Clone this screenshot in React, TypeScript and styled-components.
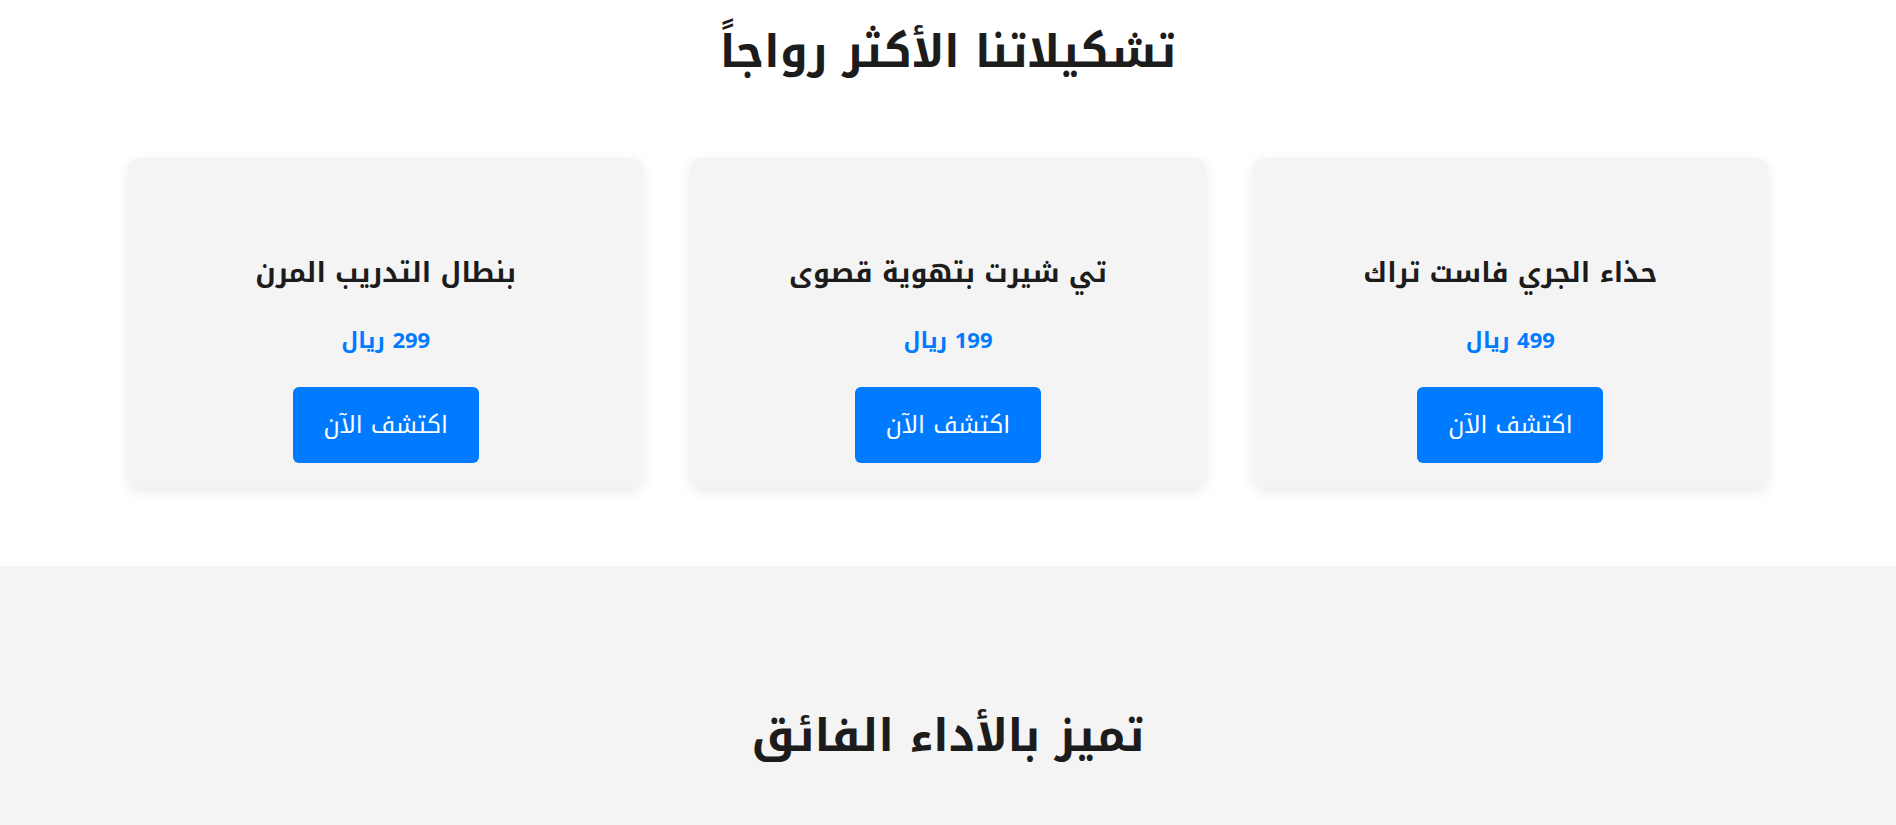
import React from 'react';
import styled, { createGlobalStyle } from 'styled-components';

const arabic = `"Noto Kufi Arabic", "Noto Sans Arabic", "DejaVu Sans", sans-serif`;

const GlobalStyle = createGlobalStyle`
  html, body {
    margin: 0;
    padding: 0;
    background: #fff;
  }
  body {
    direction: rtl;
    font-family: ${arabic};
    color: #1c1c1c;
  }
  * {
    box-sizing: border-box;
  }
`;

const Section = styled.section<{ $tone?: 'plain' | 'muted' }>`
  background: ${p => (p.$tone === 'muted' ? '#f4f4f4' : '#fff')};
  padding: ${p => (p.$tone === 'muted' ? '136px 0 80px' : '18px 0 79px')};
`;

const SectionTitle = styled.h2<{ $gap?: number }>`
  margin: 0 0 ${p => p.$gap ?? 0}px;
  text-align: center;
  font-family: ${arabic};
  font-size: 45px;
  font-weight: 700;
  line-height: 68px;
  color: #1c1c1c;
`;

const Grid = styled.div`
  display: grid;
  grid-template-columns: repeat(3, 1fr);
  gap: 47px;
  padding: 0 128px;
`;

const Card = styled.article`
  background: #f4f4f4;
  border-radius: 12px;
  box-shadow: 0 4px 14px rgba(0, 0, 0, 0.09);
  height: 329px;
  padding: 95px 24px 24px;
  display: flex;
  flex-direction: column;
  align-items: center;
  text-align: center;
`;

const ProductName = styled.h3`
  margin: 0;
  font-family: ${arabic};
  font-size: 27px;
  font-weight: 700;
  line-height: 40px;
  color: #1c1c1c;
`;

const Price = styled.p`
  margin: 31px 0 0;
  font-family: ${arabic};
  font-size: 22px;
  font-weight: 700;
  line-height: 34px;
  color: #007bff;
`;

const ShopButton = styled.a`
  margin-top: 29px;
  display: inline-flex;
  align-items: center;
  justify-content: center;
  width: 186px;
  height: 77px;
  border-radius: 6px;
  background: #007bff;
  color: #fff;
  font-family: ${arabic};
  font-size: 24px;
  font-weight: 400;
  text-decoration: none;
  cursor: pointer;
`;

type Product = { id: number; name: string; price: number };

const products: Product[] = [
  { id: 1, name: 'حذاء الجري فاست تراك', price: 499 },
  { id: 2, name: 'تي شيرت بتهوية قصوى', price: 199 },
  { id: 3, name: 'بنطال التدريب المرن', price: 299 },
];

const App: React.FC = () => (
  <>
    <GlobalStyle />
    <Section $tone="plain">
      <SectionTitle $gap={72}>تشكيلاتنا الأكثر رواجاً</SectionTitle>
      <Grid>
        {products.map(p => (
          <Card key={p.id}>
            <ProductName>{p.name}</ProductName>
            <Price>{p.price} ريال</Price>
            <ShopButton>اكتشف الآن</ShopButton>
          </Card>
        ))}
      </Grid>
    </Section>
    <Section $tone="muted">
      <SectionTitle>تميز بالأداء الفائق</SectionTitle>
    </Section>
  </>
);

export default App;
